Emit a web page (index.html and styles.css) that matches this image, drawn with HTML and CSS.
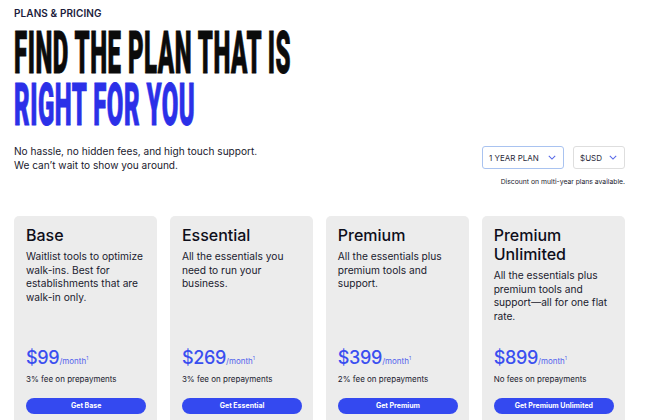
FILE: index.html
```html
<!DOCTYPE html>
<html>
<head>
<meta charset="utf-8">
<link rel="stylesheet" href="styles.css">
</head>
<body>
<main class="page">
  <p class="eyebrow">PLANS &amp; PRICING</p>
  <h1 class="headline">
    <span class="line line-dark">FIND THE PLAN THAT IS</span>
    <span class="line line-blue">RIGHT FOR YOU</span>
  </h1>
  <section class="intro">
    <p class="lead">No hassle, no hidden fees, and high touch support.<br>We can’t wait to show you around.</p>
    <div class="controls">
      <div class="selects">
        <div class="select select-focus"><span>1 YEAR PLAN</span>
          <svg class="chev" viewBox="0 0 10 6" width="8" height="5"><path d="M1 1l4 4 4-4" fill="none" stroke="currentColor" stroke-width="1.3"/></svg>
        </div>
        <div class="select select-cur"><span>$USD</span>
          <svg class="chev" viewBox="0 0 10 6" width="8" height="5"><path d="M1 1l4 4 4-4" fill="none" stroke="currentColor" stroke-width="1.3"/></svg>
        </div>
      </div>
      <p class="note">Discount on multi-year plans available.</p>
    </div>
  </section>
  <section class="cards">
    <article class="card">
      <h2 class="card-title">Base</h2>
      <p class="card-desc">Waitlist tools to optimize walk-ins. Best for establishments that are walk-in only.</p>
      <div class="price"><span class="amount">$99</span><span class="per">/month<sup>1</sup></span></div>
      <p class="fee">3% fee on prepayments</p>
      <a class="btn">Get Base</a>
    </article>
    <article class="card">
      <h2 class="card-title">Essential</h2>
      <p class="card-desc">All the essentials you need to run your business.</p>
      <div class="price"><span class="amount">$269</span><span class="per">/month<sup>1</sup></span></div>
      <p class="fee">3% fee on prepayments</p>
      <a class="btn">Get Essential</a>
    </article>
    <article class="card">
      <h2 class="card-title">Premium</h2>
      <p class="card-desc">All the essentials plus premium tools and support.</p>
      <div class="price"><span class="amount">$399</span><span class="per">/month<sup>1</sup></span></div>
      <p class="fee">2% fee on prepayments</p>
      <a class="btn">Get Premium</a>
    </article>
    <article class="card">
      <h2 class="card-title">Premium Unlimited</h2>
      <p class="card-desc">All the essentials plus premium tools and support—all for one flat rate.</p>
      <div class="price"><span class="amount">$899</span><span class="per">/month<sup>1</sup></span></div>
      <p class="fee">No fees on prepayments</p>
      <a class="btn">Get Premium Unlimited</a>
    </article>
  </section>
</main>
</body>
</html>
```
FILE: styles.css
```css
* { box-sizing: border-box; }
html, body { margin: 0; padding: 0; background: #fff; overflow: hidden; }
body { font-family: "Inter", "Noto Sans", sans-serif; color: #16162a; }
.page { width: 650px; padding: 0 25px 0 14px; }
p, h1, h2 { margin: 0; }
.eyebrow {
  padding-top: 8px;
  font-size: 10px;
  font-weight: 600;
  letter-spacing: 0.1px;
  color: #1c1c3c;
  line-height: 10px;
}
.headline {
  margin-top: 10px;
  padding-bottom: 31px;
  font-family: "Roboto", sans-serif;
  font-weight: 900;
  font-size: 24px;
  line-height: 21px;
  letter-spacing: 0.5px;
  -webkit-text-stroke: 0.4px currentColor;
}
.line {
  display: block;
  height: 21px;
  white-space: nowrap;
  transform: scaleY(2.48);
  transform-origin: left top;
}
.line-dark { color: #0b0b0b; margin-bottom: 31px; }
.line-blue { color: #2b30e8; }
.intro {
  margin-top: 12px;
  display: flex;
  justify-content: space-between;
  align-items: flex-start;
}
.lead {
  font-size: 10.1px;
  line-height: 14px;
  color: #1a1a2e;
}
.controls {
  padding-top: 2px;
  display: flex;
  flex-direction: column;
  align-items: flex-end;
}
.selects { display: flex; gap: 9px; }
.select {
  height: 23px;
  display: flex;
  align-items: center;
  justify-content: space-between;
  padding: 0 7px 0 6px;
  border: 1.5px solid #dedede;
  border-radius: 3px;
  font-size: 8px;
  white-space: nowrap;
  color: #2a2a3a;
}
.select-focus { border-color: #a9c3f0; width: 82px; }
.select-cur { width: 52px; }
.chev { color: #5566e8; }
.note {
  margin-top: 8px;
  font-size: 6.8px;
  color: #1a1a2e;
}
.cards {
  margin-top: 30px;
  display: grid;
  grid-template-columns: repeat(4, 1fr);
  gap: 12.5px;
}
.card {
  height: 210px;
  background: #ececec;
  border-radius: 5px;
  padding: 10px 8px 12px 12px;
  display: flex;
  flex-direction: column;
}
.card-title {
  font-size: 16px;
  font-weight: 500;
  line-height: 19px;
  color: #0e0e1a;
}
.card-desc {
  margin-top: 5px;
  font-size: 10.2px;
  line-height: 13.5px;
  color: #1a1a2e;
}
.price {
  margin-top: auto;
  display: flex;
  align-items: baseline;
}
.amount {
  font-size: 18px;
  font-weight: 500;
  color: #3a4ff0;
  letter-spacing: -0.3px;
}
.per { font-size: 8px; color: #5363ec; }
.per sup { font-size: 5px; }
.fee {
  margin-top: 6px;
  font-size: 8px;
  color: #1a1a2e;
}
.btn {
  margin-top: 14px;
  margin-right: 3px;
  display: block;
  height: 16px;
  line-height: 16px;
  border-radius: 8px;
  background: #3449f0;
  color: #fff;
  font-size: 7px;
  font-weight: 700;
  text-align: center;
}
```
